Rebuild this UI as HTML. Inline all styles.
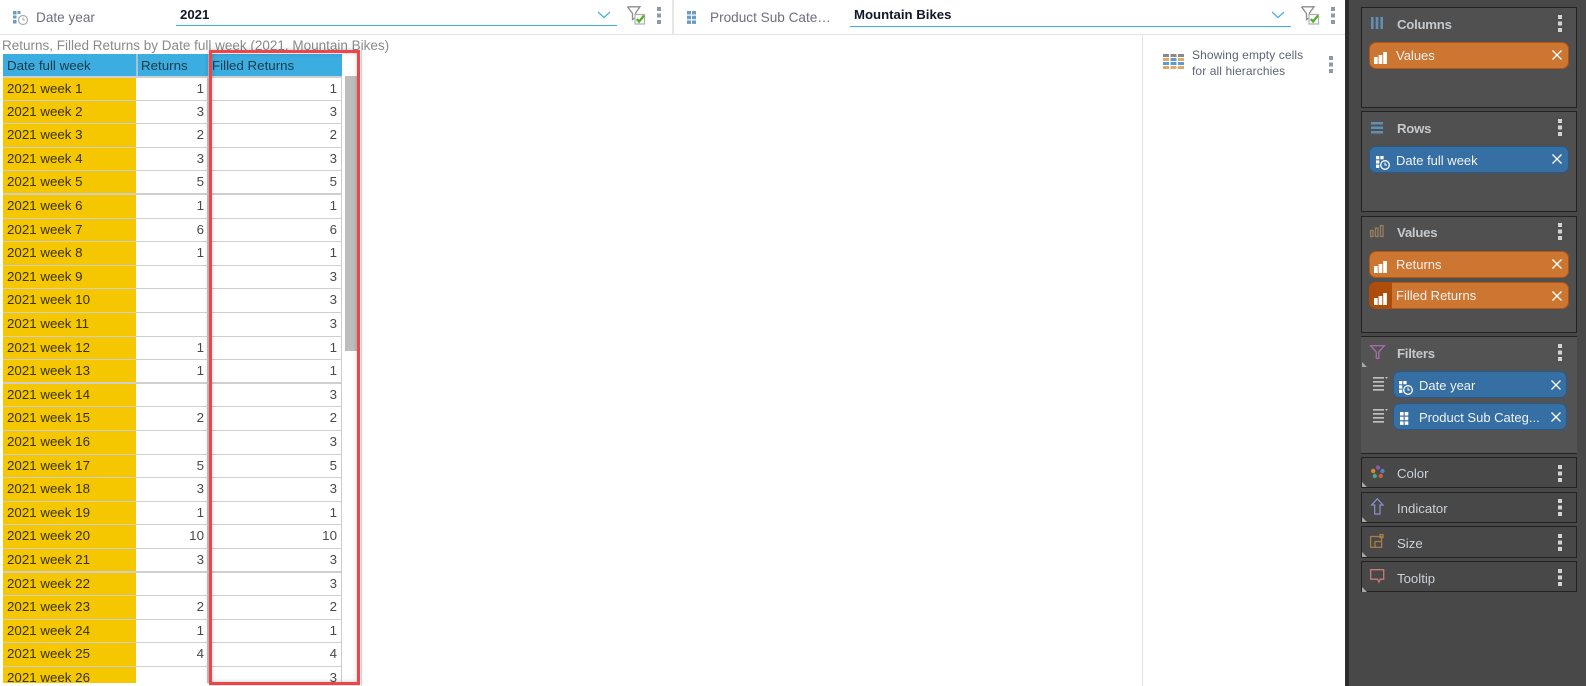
<!DOCTYPE html>
<html><head><meta charset="utf-8"><style>
*{box-sizing:border-box}
html,body{margin:0;padding:0;width:1586px;height:686px;overflow:hidden;background:#fff;font-family:"Liberation Sans",sans-serif}
.a{position:absolute}
.t{position:absolute;white-space:nowrap}
svg{position:absolute;overflow:visible}
.tbl{position:absolute;left:0;top:0;width:345px;height:683px;overflow:hidden}
.r{position:absolute;left:3px;width:339px;height:23.6px;background:#fff;font-size:13.33px;color:#4a4a4a;border-bottom:1.5px solid #cfcfcf;border-right:1px solid #ccc}
.r b{font-weight:400;position:absolute;left:0;top:0;width:133px;height:100%;background:#f4c700;color:#3a3200;padding-left:4px;line-height:21px}
.r i{font-style:normal;position:absolute;left:134px;width:72px;top:0;height:100%;text-align:right;line-height:21px;padding-right:3px;border-right:2px solid #c4c4c4}
.r u{text-decoration:none;position:absolute;right:0;top:0;width:132px;text-align:right;padding-right:4px;line-height:21px}
.r.s{border-bottom:2.5px solid #cfcfcf}
.dots{position:absolute;width:4px;height:17px;background:linear-gradient(#8f9aa8 0 4px,transparent 4px 6.5px,#8f9aa8 6.5px 10.5px,transparent 10.5px 13px,#8f9aa8 13px 17px)}
.dw{position:absolute;left:1558px;width:4px;height:17px;background:linear-gradient(#d4d4d4 0 4px,transparent 4px 6.5px,#d4d4d4 6.5px 10.5px,transparent 10.5px 13px,#d4d4d4 13px 17px)}
.p{position:absolute;left:1361px;width:216px;border:1px solid #222;background:#484848}
.ph{position:absolute;left:1397px;font-size:13.2px;color:#c4c9ce;white-space:nowrap;font-weight:700;letter-spacing:-.25px}
.pl{position:absolute;left:1397px;font-size:13.2px;color:#c9d2da;white-space:nowrap}
.pill{position:absolute;height:27px;border-radius:7px;color:#f2f2f2;font-size:13px;line-height:26px;white-space:nowrap}
.o{left:1369px;width:200px;background:#cc7631;border:1px solid #af5413;padding-left:26px}
.bl{background:#366fa3;border:1px solid #2a5a8a;line-height:28px}
.tri{position:absolute;left:1362px;width:0;height:0;border-left:5px solid #a8a8a8;border-top:5px solid transparent}
</style></head><body>

<div class="tbl">
<div class="a" style="left:3px;top:54px;width:339px;height:23px;background:#3bade0;font-size:13.33px;color:#1f3a48;line-height:23px">
<span class="t" style="left:4px">Date full week</span><span class="t" style="left:138px">Returns</span><span class="t" style="left:209px">Filled Returns</span>
<div class="a" style="left:133px;top:0;width:1.5px;height:23px;background:#a4c4d6"></div>
<div class="a" style="left:204.500px;top:0;width:1.5px;height:23px;background:#a4c4d6"></div>
</div>
<div class="a" style="left:3px;top:76px;width:339px;height:1.5px;background:#cfcfcf"></div>
<div class="r" style="top:77.5px"><b>2021 week 1</b><i>1</i><u>1</u></div>
<div class="r" style="top:100.6px"><b>2021 week 2</b><i>3</i><u>3</u></div>
<div class="r" style="top:124.2px"><b>2021 week 3</b><i>2</i><u>2</u></div>
<div class="r" style="top:147.8px"><b>2021 week 4</b><i>3</i><u>3</u></div>
<div class="r s" style="top:171.4px"><b>2021 week 5</b><i>5</i><u>5</u></div>
<div class="r" style="top:195px"><b>2021 week 6</b><i>1</i><u>1</u></div>
<div class="r" style="top:218.6px"><b>2021 week 7</b><i>6</i><u>6</u></div>
<div class="r" style="top:242.2px"><b>2021 week 8</b><i>1</i><u>1</u></div>
<div class="r" style="top:265.8px"><b>2021 week 9</b><i></i><u>3</u></div>
<div class="r" style="top:289.4px"><b>2021 week 10</b><i></i><u>3</u></div>
<div class="r" style="top:313px"><b>2021 week 11</b><i></i><u>3</u></div>
<div class="r" style="top:336.6px"><b>2021 week 12</b><i>1</i><u>1</u></div>
<div class="r s" style="top:360.2px"><b>2021 week 13</b><i>1</i><u>1</u></div>
<div class="r" style="top:383.8px"><b>2021 week 14</b><i></i><u>3</u></div>
<div class="r" style="top:407.4px"><b>2021 week 15</b><i>2</i><u>2</u></div>
<div class="r" style="top:431px"><b>2021 week 16</b><i></i><u>3</u></div>
<div class="r" style="top:454.6px"><b>2021 week 17</b><i>5</i><u>5</u></div>
<div class="r" style="top:478.2px"><b>2021 week 18</b><i>3</i><u>3</u></div>
<div class="r" style="top:501.8px"><b>2021 week 19</b><i>1</i><u>1</u></div>
<div class="r" style="top:525.4px"><b>2021 week 20</b><i>10</i><u>10</u></div>
<div class="r s" style="top:549px"><b>2021 week 21</b><i>3</i><u>3</u></div>
<div class="r" style="top:572.6px"><b>2021 week 22</b><i></i><u>3</u></div>
<div class="r" style="top:596.2px"><b>2021 week 23</b><i>2</i><u>2</u></div>
<div class="r" style="top:619.8px"><b>2021 week 24</b><i>1</i><u>1</u></div>
<div class="r" style="top:643.4px"><b>2021 week 25</b><i>4</i><u>4</u></div>
<div class="r" style="top:667px"><b>2021 week 26</b><i></i><u>3</u></div>
</div>
<div class="t" style="left:2px;top:38px;font-size:13.5px;color:#8a8a8a">Returns, Filled Returns by Date full week (2021, Mountain Bikes)</div>
<div class="a" style="left:345px;top:76px;width:12px;height:275px;background:#bdbdbd"></div>
<div class="a" style="left:361px;top:50px;width:1px;height:636px;background:#e4e4e4"></div>
<div class="a" style="left:209px;top:50px;width:151px;height:635px;border:3px solid #f0444b;box-shadow:0 0 5px rgba(0,0,0,.22),inset 0 0 4px rgba(0,0,0,.22)"></div>

<!-- top bar -->
<div class="a" style="left:0;top:34px;width:1345px;height:1px;background:#e3e3e3"></div>
<div class="a" style="left:672px;top:0;width:2px;height:34px;background:#e6e6e6"></div>
<div class="a" style="left:1142px;top:35px;width:1px;height:651px;background:#e3e3e3"></div>
<svg style="left:13px;top:11px" width="16" height="15" viewBox="0 0 16 15"><g fill="#6a9cc4"><rect x="0" y="0" width="3.500" height="3.500"/><rect x="4.500" y="0" width="3" height="3"/><rect x="0" y="4.500" width="3.500" height="3"/><rect x="0" y="9" width="3.500" height="3.500"/></g><circle cx="10" cy="9" r="4.500" fill="#fff" stroke="#aaa" stroke-width="1.200"/><path d="M10 6.500V9h2" fill="none" stroke="#aaa"/></svg>
<div class="t" style="left:36px;top:9px;font-size:13.6px;line-height:18px;color:#6e6e82">Date year</div>
<div class="t" style="left:180px;top:6px;font-size:13.2px;line-height:17px;font-weight:700;color:#10182a">2021</div>
<div class="a" style="left:176px;top:25px;width:441px;height:1px;background:#3bade0"></div>
<svg style="left:597px;top:11px" width="14" height="8" viewBox="0 0 14 8"><path d="M1 1l6 5.500L13 1" fill="none" stroke="#45b0e0" stroke-width="1.200"/></svg>
<svg style="left:627px;top:6px" width="19" height="19" viewBox="0 0 19 19"><path d="M.5.800h12.500L8.500 7v3M.5.800L5.500 7.500v6l2-1.300" fill="none" stroke="#8c8c8c" stroke-width="1.300"/><path d="M8 8.500h9.500v9.500H8z" fill="#fff" stroke="#b0b0b0" stroke-width="1.200"/><path d="M9.800 13l2.300 2.600L17 9.500" fill="none" stroke="#4fb02a" stroke-width="2.300"/></svg>
<div class="dots" style="left:657px;top:7px"></div>
<svg style="left:687px;top:11px" width="10" height="13" viewBox="0 0 10 13"><g fill="#6a9cc4"><rect width="4" height="3.500"/><rect x="5" width="4" height="3.500"/><rect y="4.700" width="4" height="3.500"/><rect x="5" y="4.700" width="4" height="3.500"/><rect y="9.400" width="4" height="3.500"/><rect x="5" y="9.400" width="4" height="3.500"/></g></svg>
<div class="t" style="left:710px;top:9px;font-size:13.6px;line-height:18px;color:#6e6e82">Product Sub Cate…</div>
<div class="t" style="left:854px;top:6px;font-size:13.2px;line-height:17px;font-weight:700;color:#10182a">Mountain Bikes</div>
<div class="a" style="left:850px;top:26px;width:441px;height:1px;background:#3bade0"></div>
<svg style="left:1271px;top:11px" width="14" height="8" viewBox="0 0 14 8"><path d="M1 1l6 5.500L13 1" fill="none" stroke="#45b0e0" stroke-width="1.200"/></svg>
<svg style="left:1301px;top:6px" width="19" height="19" viewBox="0 0 19 19"><path d="M.5.800h12.500L8.500 7v3M.5.800L5.500 7.500v6l2-1.300" fill="none" stroke="#8c8c8c" stroke-width="1.300"/><path d="M8 8.500h9.500v9.500H8z" fill="#fff" stroke="#b0b0b0" stroke-width="1.200"/><path d="M9.800 13l2.300 2.600L17 9.500" fill="none" stroke="#4fb02a" stroke-width="2.300"/></svg>
<div class="dots" style="left:1331px;top:7px"></div>

<svg style="left:1163px;top:54px" width="21" height="16" viewBox="0 0 21 16"><g fill="#8a8a8a"><rect width="6" height="3"/><rect x="7.500" width="6" height="3"/><rect x="15" width="6" height="3"/></g><g fill="#dcab6c"><rect y="4" width="6" height="3"/><rect y="12" width="6" height="3"/><rect x="15" y="4" width="6" height="3"/><rect x="15" y="12" width="6" height="3"/><rect x="7.500" y="12" width="6" height="3"/></g><g fill="#5f9cc9"><rect y="8" width="6" height="3"/><rect x="7.500" y="4" width="6" height="3"/><rect x="7.500" y="8" width="6" height="3"/><rect x="15" y="8" width="6" height="3"/></g></svg>
<div class="t" style="left:1192px;top:47px;font-size:12px;line-height:16px;color:#5f6472;letter-spacing:.1px">Showing empty cells<br>for all hierarchies</div>
<div class="dots" style="left:1329px;top:56px"></div>

<!-- sidebar -->
<div class="a" style="left:1345px;top:0;width:241px;height:686px;background:#484848"></div>
<div class="a" style="left:1345px;top:0;width:4px;height:686px;background:#2c2c2c"></div>

<div class="p" style="top:7px;height:101px;background:#505050"></div>
<div class="p" style="top:111px;height:101px;background:#505050"></div>
<div class="p" style="top:216px;height:117px;background:#505050"></div>
<div class="a" style="left:1361px;top:336px;width:216px;height:118px;background:#535353;border-top:1px solid #222;border-bottom:1px solid #222"></div>
<div class="p" style="top:457px;height:31px"></div>
<div class="p" style="top:492px;height:31px"></div>
<div class="p" style="top:526px;height:32px"></div>
<div class="p" style="top:561px;height:31px"></div>

<svg style="left:1371px;top:17px" width="12" height="12" viewBox="0 0 12 12"><g fill="#5f90b4"><rect width="2.600" height="12"/><rect x="4.700" width="2.600" height="12"/><rect x="9.400" width="2.600" height="12"/></g></svg>
<div class="ph" style="top:17px">Columns</div>
<div class="dw" style="top:15px"></div>
<div class="pill o" style="top:42px">Values</div>
<svg style="left:1374px;top:52px" width="13" height="12" viewBox="0 0 13 12"><g fill="#fff"><rect y="5" width="3.700" height="7"/><rect x="4.600" y="3" width="3.700" height="9"/><rect x="9.200" y="0" width="3.700" height="12"/></g></svg>
<svg style="left:1552px;top:50px" width="10" height="10" viewBox="0 0 10 10"><path d="M.5.500l9 9M9.500.500l-9 9" stroke="#fff" stroke-width="1.300"/></svg>

<svg style="left:1371px;top:122px" width="12" height="12" viewBox="0 0 12 12"><g fill="#5f90b4"><rect width="12" height="2.500"/><rect y="4.500" width="12" height="2.500"/><rect y="9" width="12" height="2.500"/></g></svg>
<div class="ph" style="top:121px">Rows</div>
<div class="dw" style="top:119px"></div>
<div class="pill bl" style="left:1369px;width:200px;top:146px;padding-left:26px">Date full week</div>
<svg style="left:1376px;top:156px" width="15" height="14" viewBox="0 0 15 14"><g fill="#fff"><rect width="3.300" height="3.300"/><rect x="4.300" width="3.300" height="3.300"/><rect y="4.300" width="3.300" height="3.300"/><rect y="8.600" width="3.300" height="3.300"/></g><circle cx="9" cy="9" r="4.300" fill="#366fa3" stroke="#fff" stroke-width="1.300"/><path d="M9 6.500V9h2" fill="none" stroke="#fff"/></svg>
<svg style="left:1552px;top:154px" width="10" height="10" viewBox="0 0 10 10"><path d="M.5.500l9 9M9.500.500l-9 9" stroke="#fff" stroke-width="1.300"/></svg>

<svg style="left:1370px;top:225px" width="14" height="12" viewBox="0 0 14 12"><g fill="none" stroke="#97805c" stroke-width="1.300"><rect x=".6" y="5.500" width="2.500" height="6"/><rect x="5.500" y="3" width="2.500" height="8.500"/><rect x="10.500" y=".6" width="2.500" height="10.900"/></g></svg>
<div class="ph" style="top:225px">Values</div>
<div class="dw" style="top:223px"></div>
<div class="pill o" style="top:251px">Returns</div>
<svg style="left:1374px;top:261px" width="13" height="12" viewBox="0 0 13 12"><g fill="#fff"><rect y="5" width="3.700" height="7"/><rect x="4.600" y="3" width="3.700" height="9"/><rect x="9.200" y="0" width="3.700" height="12"/></g></svg>
<svg style="left:1552px;top:259px" width="10" height="10" viewBox="0 0 10 10"><path d="M.5.500l9 9M9.500.500l-9 9" stroke="#fff" stroke-width="1.300"/></svg>
<div class="pill o" style="top:282px">Filled Returns</div>
<div class="a" style="left:1369px;top:282px;width:23px;height:27px;background:#ae4c0a;border-radius:7px 0 0 7px"></div>
<svg style="left:1374px;top:293px" width="13" height="12" viewBox="0 0 13 12"><g fill="#fff"><rect y="5" width="3.700" height="7"/><rect x="4.600" y="3" width="3.700" height="9"/><rect x="9.200" y="0" width="3.700" height="12"/></g></svg>
<svg style="left:1552px;top:291px" width="10" height="10" viewBox="0 0 10 10"><path d="M.5.500l9 9M9.500.500l-9 9" stroke="#fff" stroke-width="1.300"/></svg>

<svg style="left:1370px;top:345px" width="15" height="14" viewBox="0 0 15 14"><path d="M.7.700h13.500L8.800 7v6.300H6.300V7z" fill="none" stroke="#a56ba8" stroke-width="1.400"/></svg>
<div class="ph" style="top:346px">Filters</div>
<div class="dw" style="top:344px"></div>
<div class="tri" style="top:362px"></div>
<svg style="left:1373px;top:377px" width="16" height="14" viewBox="0 0 16 14"><g fill="#bdbdbd"><rect y="0" width="11" height="1.700"/><rect y="4" width="11" height="1.700"/><rect y="8" width="11" height="1.700"/><rect y="12" width="11" height="1.700"/><path d="M12 0h3l-1.500 2z"/></g></svg>
<div class="pill bl" style="left:1393px;width:174px;top:371px;padding-left:25px">Date year</div>
<svg style="left:1399px;top:381px" width="15" height="14" viewBox="0 0 15 14"><g fill="#fff"><rect width="3.300" height="3.300"/><rect x="4.300" width="3.300" height="3.300"/><rect y="4.300" width="3.300" height="3.300"/><rect y="8.600" width="3.300" height="3.300"/></g><circle cx="9" cy="9" r="4.300" fill="#366fa3" stroke="#fff" stroke-width="1.300"/><path d="M9 6.500V9h2" fill="none" stroke="#fff"/></svg>
<svg style="left:1551px;top:380px" width="10" height="10" viewBox="0 0 10 10"><path d="M.5.500l9 9M9.500.500l-9 9" stroke="#fff" stroke-width="1.300"/></svg>
<svg style="left:1373px;top:409px" width="16" height="14" viewBox="0 0 16 14"><g fill="#bdbdbd"><rect y="0" width="11" height="1.700"/><rect y="4" width="11" height="1.700"/><rect y="8" width="11" height="1.700"/><rect y="12" width="11" height="1.700"/><path d="M12 0h3l-1.500 2z"/></g></svg>
<div class="pill bl" style="left:1393px;width:174px;top:403px;padding-left:25px">Product Sub Categ...</div>
<svg style="left:1400px;top:412px" width="9" height="13" viewBox="0 0 9 13"><g fill="#fff"><rect width="3.600" height="3.500"/><rect x="4.700" width="3.600" height="3.500"/><rect y="4.700" width="3.600" height="3.500"/><rect x="4.700" y="4.700" width="3.600" height="3.500"/><rect y="9.400" width="3.600" height="3.500"/><rect x="4.700" y="9.400" width="3.600" height="3.500"/></g></svg>
<svg style="left:1551px;top:412px" width="10" height="10" viewBox="0 0 10 10"><path d="M.5.500l9 9M9.500.500l-9 9" stroke="#fff" stroke-width="1.300"/></svg>

<svg style="left:1371px;top:465px" width="14" height="14" viewBox="0 0 14 14"><circle cx="7" cy="2.500" r="2.200" fill="#8a5aa8"/><circle cx="2.200" cy="6" r="2.200" fill="#d88a2a"/><circle cx="11.500" cy="6" r="2.200" fill="#4a84c4"/><circle cx="3.800" cy="11" r="2.200" fill="#5aa08a"/><circle cx="9.800" cy="11" r="2.200" fill="#c8603a"/></svg>
<div class="pl" style="top:466px">Color</div>
<div class="dw" style="top:465px"></div>
<div class="tri" style="top:482px"></div>
<svg style="left:1371px;top:498px" width="13" height="17" viewBox="0 0 13 17"><path d="M6.300.8L12 7H9v9H3.700V7H.6z" fill="none" stroke="#8f8fd0" stroke-width="1.200"/></svg>
<div class="pl" style="top:501px">Indicator</div>
<div class="dw" style="top:499px"></div>
<div class="tri" style="top:517px"></div>
<svg style="left:1370px;top:534px" width="14" height="14" viewBox="0 0 14 14"><g fill="none" stroke="#a57f49" stroke-width="1.300"><rect x=".6" y="2.500" width="11" height="10.800"/><path d="M5 13V7.500h6.500"/><rect x="10" y=".6" width="3" height="3"/></g></svg>
<div class="pl" style="top:536px">Size</div>
<div class="dw" style="top:534px"></div>
<div class="tri" style="top:552px"></div>
<svg style="left:1370px;top:569px" width="15" height="14" viewBox="0 0 15 14"><path d="M.7.700h13v9.500h-3.500L9 13 7.500 10.200H.7z" fill="none" stroke="#c77a7a" stroke-width="1.300"/></svg>
<div class="pl" style="top:571px">Tooltip</div>
<div class="dw" style="top:569px"></div>
<div class="tri" style="top:587px"></div>
</body></html>
